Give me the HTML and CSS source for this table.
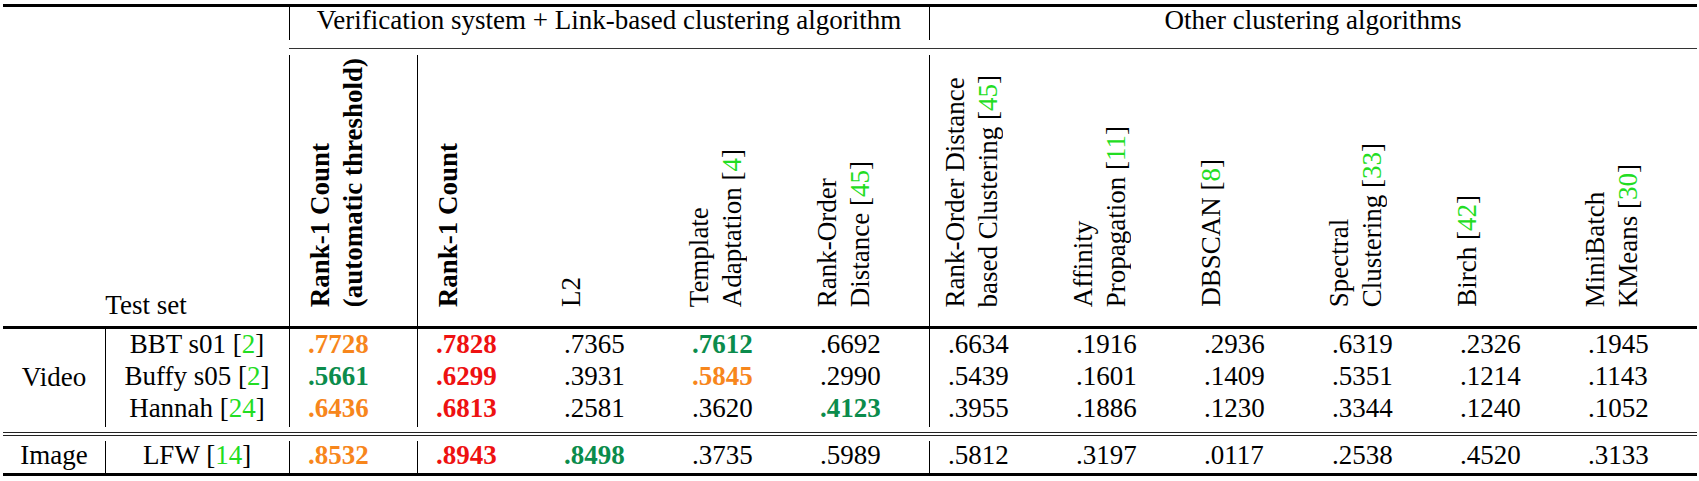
FILE: index.html
```html
<!DOCTYPE html>
<html>
<head>
<meta charset="utf-8">
<title>Clustering results</title>
<link rel="stylesheet" href="styles.css">
</head>
<body>
<div class="tbl">
  <div class="full rule-thick"></div>

  <div class="h1 span2"></div>
  <div class="h1 span5 vl">Verification system + Link-based clustering algorithm</div>
  <div class="h1 span6 vl">Other clustering algorithms</div>

  <div class="full gap8"></div>
  <div class="cmid"></div>
  <div class="full gap6"></div>

  <div class="testset span2">Test set</div>
  <div class="rh vl bhead"><div class="rot b">Rank-1 Count<br>(automatic threshold)</div></div>
  <div class="rh vl bhead"><div class="rot b">Rank-1 Count</div></div>
  <div class="rh"><div class="rot">L2</div></div>
  <div class="rh"><div class="rot">Template<br>Adaptation [<span class="cite">4</span>]</div></div>
  <div class="rh"><div class="rot">Rank-Order<br>Distance [<span class="cite">45</span>]</div></div>
  <div class="rh vl"><div class="rot">Rank-Order Distance<br>based Clustering [<span class="cite">45</span>]</div></div>
  <div class="rh"><div class="rot">Affinity<br>Propagation [<span class="cite">11</span>]</div></div>
  <div class="rh"><div class="rot">DBSCAN [<span class="cite">8</span>]</div></div>
  <div class="rh"><div class="rot">Spectral<br>Clustering [<span class="cite">33</span>]</div></div>
  <div class="rh"><div class="rot">Birch [<span class="cite">42</span>]</div></div>
  <div class="rh"><div class="rot">MiniBatch<br>KMeans [<span class="cite">30</span>]</div></div>

  <div class="full rule-thick"></div>

  <div class="grp">Video</div>
  <div class="name vl">BBT s01 [<span class="cite">2</span>]</div>
  <div class="num vl o">.7728</div>
  <div class="num vl r">.7828</div>
  <div class="num">.7365</div>
  <div class="num g">.7612</div>
  <div class="num">.6692</div>
  <div class="num vl">.6634</div>
  <div class="num">.1916</div>
  <div class="num">.2936</div>
  <div class="num">.6319</div>
  <div class="num">.2326</div>
  <div class="num">.1945</div>

  <div class="name vl">Buffy s05 [<span class="cite">2</span>]</div>
  <div class="num vl g">.5661</div>
  <div class="num vl r">.6299</div>
  <div class="num">.3931</div>
  <div class="num o">.5845</div>
  <div class="num">.2990</div>
  <div class="num vl">.5439</div>
  <div class="num">.1601</div>
  <div class="num">.1409</div>
  <div class="num">.5351</div>
  <div class="num">.1214</div>
  <div class="num">.1143</div>

  <div class="name vl last">Hannah [<span class="cite">24</span>]</div>
  <div class="num vl o last">.6436</div>
  <div class="num vl r last">.6813</div>
  <div class="num last">.2581</div>
  <div class="num last">.3620</div>
  <div class="num g last">.4123</div>
  <div class="num vl last">.3955</div>
  <div class="num last">.1886</div>
  <div class="num last">.1230</div>
  <div class="num last">.3344</div>
  <div class="num last">.1240</div>
  <div class="num last">.1052</div>

  <div class="full gap5"></div>
  <div class="full rule-thin"></div>
  <div class="full gap2"></div>
  <div class="full rule-thin"></div>
  <div class="full gap5"></div>

  <div class="grp single">Image</div>
  <div class="name vl single">LFW [<span class="cite">14</span>]</div>
  <div class="num vl o single">.8532</div>
  <div class="num vl r single">.8943</div>
  <div class="num g single">.8498</div>
  <div class="num single">.3735</div>
  <div class="num single">.5989</div>
  <div class="num vl single">.5812</div>
  <div class="num single">.3197</div>
  <div class="num single">.0117</div>
  <div class="num single">.2538</div>
  <div class="num single">.4520</div>
  <div class="num single">.3133</div>

  <div class="full rule-thick"></div>
</div>
</body>
</html>
```

FILE: styles.css
```css
body {
  margin: 0;
  background: #ffffff;
}

.tbl {
  display: grid;
  grid-template-columns: 102px 184px repeat(11, 128px);
  width: 1694px;
  margin: 4px 0 0 3px;
  font-family: "Liberation Serif", "Times New Roman", serif;
  font-size: 27px;
  color: #000000;
}

.tbl > div {
  box-sizing: border-box;
}

.full { grid-column: 1 / -1; }
.span2 { grid-column: span 2; }
.span5 { grid-column: span 5; }
.span6 { grid-column: span 6; }

.rule-thick { height: 3px; background: #000000; }
.rule-thin { height: 1px; background: #222222; }
.gap2 { height: 2px; }
.gap5 { height: 5px; }
.gap6 { height: 6px; }
.gap8 { height: 8px; }

.cmid {
  grid-column: 3 / -1;
  height: 1px;
  background: #333333;
}

.vl { box-shadow: inset 1px 0 0 #000000; }

.h1 {
  height: 33px;
  line-height: 27px;
  text-align: center;
  white-space: nowrap;
}

.testset {
  height: 271px;
  display: flex;
  align-items: flex-end;
  justify-content: center;
  line-height: 27px;
  padding-bottom: 7px;
}

.rh {
  height: 271px;
  display: flex;
  align-items: flex-end;
  justify-content: flex-start;
  padding: 0 0 19px 10px;
}

.rh.bhead { padding-left: 15px; }

.rot {
  writing-mode: vertical-rl;
  transform: rotate(180deg);
  line-height: 33px;
  white-space: nowrap;
}

.b { font-weight: bold; }

.cite { color: #22dd22; }

.grp {
  grid-row: span 3;
  display: flex;
  align-items: center;
  justify-content: center;
  line-height: 30px;
  padding-bottom: 2px;
}

.grp.single { grid-row: span 1; }

.name {
  height: 32px;
  line-height: 30px;
  padding-bottom: 2px;
  text-align: center;
  white-space: nowrap;
}

.num {
  height: 32px;
  line-height: 30px;
  padding: 0 0 2px 19px;
  white-space: nowrap;
}

.last { height: 34px; padding-bottom: 4px; }

.single { height: 32px; line-height: 28px; padding-bottom: 4px; }

.o { color: #f7861c; font-weight: bold; }
.r { color: #ee1111; font-weight: bold; }
.g { color: #0b8c4c; font-weight: bold; }
```
